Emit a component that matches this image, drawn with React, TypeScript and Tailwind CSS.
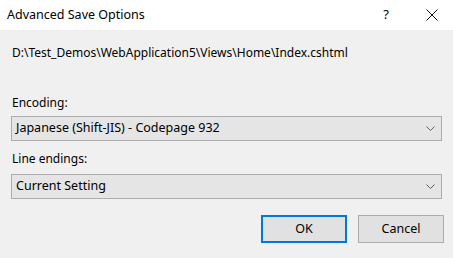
import React from "react";

const font = { fontFamily: '"Microsoft YaHei UI", "Noto Sans", "Noto Sans CJK SC", sans-serif' };

function Chevron() {
  return (
    <svg width="9" height="5" viewBox="0 0 9 5" className="shrink-0">
      <path d="M0.5 0.5 L4.5 4.5 L8.5 0.5" fill="none" stroke="#606060" strokeWidth="1" />
    </svg>
  );
}

function Combo({ value }: { value: string }) {
  return (
    <div className="h-[25px] border border-[#adadad] bg-[#e5e5e5] flex items-center justify-between pl-[4px] pr-[6px]">
      <span className="text-[12.5px] text-black leading-none">{value}</span>
      <Chevron />
    </div>
  );
}

export default function App() {
  return (
    <div className="w-[453px] h-[258px] bg-[#f0f0f0] flex flex-col text-black overflow-hidden" style={font}>
      <div className="h-[30px] bg-white flex items-center shrink-0">
        <span className="pl-[7px] text-[12.5px] flex-1">Advanced Save Options</span>
        <span className="w-[20px] text-center text-[13px] mr-[30px]">?</span>
        <svg width="12" height="12" viewBox="0 0 12 12" className="mr-[15px]">
          <path d="M0.5 0.5 L11.5 11.5 M11.5 0.5 L0.5 11.5" stroke="#111" strokeWidth="1" />
        </svg>
      </div>
      <div className="flex flex-col px-[11px]">
        <div className="pt-[14px] pl-[1px] text-[12px] h-[18px] leading-[18px] box-content">D:\Test_Demos\WebApplication5\Views\Home\Index.cshtml</div>
        <div className="mt-[32px] pl-[1px] text-[12px] h-[18px] leading-[18px]">Encoding:</div>
        <div className="mt-[4px]">
          <Combo value="Japanese (Shift-JIS) - Codepage 932" />
        </div>
        <div className="mt-[9px] pl-[1px] text-[12px] h-[18px] leading-[18px]">Line endings:</div>
        <div className="mt-[6px]">
          <Combo value="Current Setting" />
        </div>
        <div className="mt-[16px] flex justify-end gap-[11px] mr-[-2px]">
          <button className="w-[86px] h-[28px] border-2 border-[#0078d7] bg-[#e1e1e1] text-[12.5px] flex items-center justify-center">OK</button>
          <button className="w-[86px] h-[28px] border border-[#adadad] bg-[#e1e1e1] text-[12.5px] flex items-center justify-center">Cancel</button>
        </div>
      </div>
    </div>
  );
}
